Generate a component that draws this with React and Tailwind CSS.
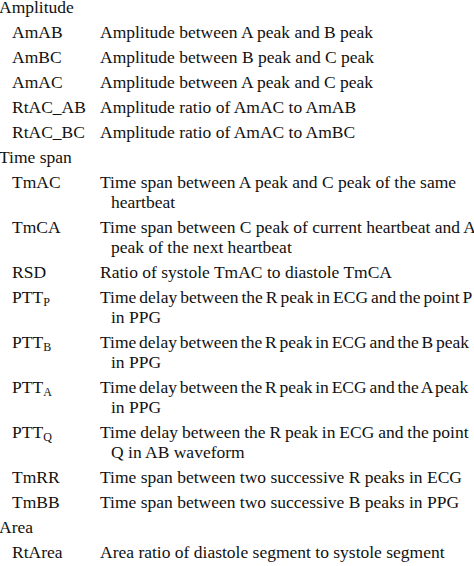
const sections = [
  {
    title: 'Amplitude',
    rows: [
      { name: 'AmAB', lines: ['Amplitude between A peak and B peak'] },
      { name: 'AmBC', lines: ['Amplitude between B peak and C peak'] },
      { name: 'AmAC', lines: ['Amplitude between A peak and C peak'] },
      { name: 'RtAC_AB', lines: ['Amplitude ratio of AmAC to AmAB'] },
      { name: 'RtAC_BC', lines: ['Amplitude ratio of AmAC to AmBC'] },
    ],
  },
  {
    title: 'Time span',
    rows: [
      { name: 'TmAC', lines: ['Time span between A peak and C peak of the same', 'heartbeat'] },
      { name: 'TmCA', lines: ['Time span between C peak of current heartbeat and A', 'peak of the next heartbeat'] },
      { name: 'RSD', lines: ['Ratio of systole TmAC to diastole TmCA'] },
      { name: 'PTT', sub: 'P', ws: '[word-spacing:-1.4px]', lines: ['Time delay between the R peak in ECG and the point P', 'in PPG'] },
      { name: 'PTT', sub: 'B', ws: '[word-spacing:-1.6px]', lines: ['Time delay between the R peak in ECG and the B peak', 'in PPG'] },
      { name: 'PTT', sub: 'A', ws: '[word-spacing:-1.6px]', lines: ['Time delay between the R peak in ECG and the A peak', 'in PPG'] },
      { name: 'PTT', sub: 'Q', ws: '[word-spacing:-0.5px]', lines: ['Time delay between the R peak in ECG and the point', 'Q in AB waveform'] },
      { name: 'TmRR', lines: ['Time span between two successive R peaks in ECG'] },
      { name: 'TmBB', lines: ['Time span between two successive B peaks in PPG'] },
    ],
  },
  {
    title: 'Area',
    rows: [{ name: 'RtArea', lines: ['Area ratio of diastole segment to systole segment'] }],
  },
];

export default function App() {
  return (
    <div
      className="w-[474px] h-[566px] overflow-hidden bg-white text-[#111] text-[17.5px] leading-[20px]"
      style={{ fontFamily: '"Liberation Serif", "Times New Roman", serif' }}
    >
      <div className="-mt-[6px]">
        {sections.map((s) => (
          <div key={s.title}>
            <div className="py-[2.5px] -ml-[1px] whitespace-nowrap">{s.title}</div>
            {s.rows.map((r, i) => (
              <div key={i} className="flex py-[2.5px] whitespace-nowrap">
                <div className="w-[100px] shrink-0 pl-[12px]">
                  {r.name}
                  {r.sub && <span className="text-[12px] relative top-[3px]">{r.sub}</span>}
                </div>
                <div>
                  {r.lines.map((l, j) => (
                    <div key={j} className={j > 0 ? 'pl-[11px]' : r.ws || ''}>
                      {l}
                    </div>
                  ))}
                </div>
              </div>
            ))}
          </div>
        ))}
      </div>
    </div>
  );
}
